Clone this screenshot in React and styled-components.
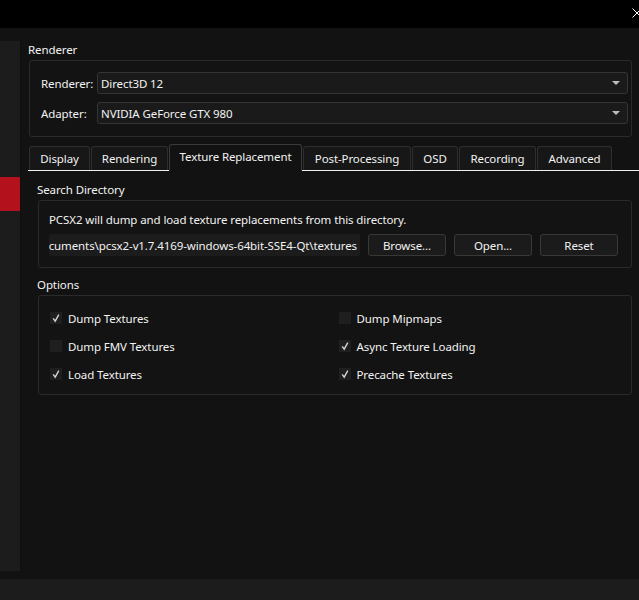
import React from "react"
import styled, { createGlobalStyle } from "styled-components"

const GlobalStyle = createGlobalStyle`
  html, body {
    margin: 0;
    padding: 0;
    overflow: hidden;
    background: #121212;
  }
  body {
    font-family: "Noto Sans", "Liberation Sans", sans-serif;
    font-size: 11.5px;
    letter-spacing: -0.1px;
    color: #f2f2f2;
  }
`

const Window = styled.div`
  width: 639px;
  height: 600px;
  display: flex;
  flex-direction: column;
  background: #121212;
  overflow: hidden;
`

const TitleBar = styled.div`
  height: 28px;
  flex: none;
  background: #000;
  display: flex;
  justify-content: flex-end;
  align-items: flex-start;
  padding-top: 8px;
  box-sizing: border-box;
  margin-right: -3px;
`

const Body = styled.div`
  flex: 1;
  display: flex;
  min-height: 0;
`

const Sidebar = styled.div`
  width: 21px;
  flex: none;
  margin-top: 13px;
  height: 530px;
  background: #1c1c1c;
  border-right: 1px solid #0e0e0e;
  box-sizing: border-box;
  padding-top: 136px;
`

const SideItem = styled.div`
  height: 34px;
  background: ${p => (p.active ? "#b3121c" : "transparent")};
`

const Content = styled.div`
  flex: 1;
  padding: 14px 8px 0 7px;
  display: flex;
  flex-direction: column;
`

const GroupTitle = styled.div`
  height: 16px;
  line-height: 16px;
  margin-bottom: 2px;
  margin-top: ${p => p.gap || 0}px;
`

const GroupBox = styled.div`
  border: 1px solid #2a2a2a;
  border-radius: 3px;
  background: #131313;
  margin-left: 1px;
`

const FormGrid = styled.div`
  display: grid;
  grid-template-columns: 56px 1fr;
  row-gap: 8px;
  align-items: center;
  padding: 11px 3px 12px 11px;
`

const Combo = styled.div`
  height: 22px;
  box-sizing: border-box;
  border: 1px solid #353535;
  border-radius: 3px;
  background: #1a1a1a;
  display: flex;
  align-items: center;
  justify-content: space-between;
  padding: 0 7px 0 3px;
`

const Arrow = styled.span`
  width: 0;
  height: 0;
  border-left: 4px solid transparent;
  border-right: 4px solid transparent;
  border-top: 4px solid #bdbdbd;
`

const TabBar = styled.div`
  display: flex;
  align-items: flex-end;
  gap: 1px;
  margin-top: 7px;
  padding-left: 1px;
  margin-right: -8px;
  border-bottom: 1px solid #f0f0f0;
  height: 27px;
  box-sizing: border-box;
`

const Tab = styled.div`
  width: ${p => p.w}px;
  height: ${p => (p.active ? 27 : 24)}px;
  box-sizing: border-box;
  border: 1px solid ${p => (p.active ? "#3a3a3a" : "#2e2e2e")};
  border-bottom: ${p => (p.active ? "1px solid #121212" : "none")};
  border-radius: 3px 3px 0 0;
  background: ${p => (p.active ? "#121212" : "#171717")};
  display: flex;
  align-items: center;
  justify-content: center;
  padding-bottom: ${p => (p.active ? 3 : 0)}px;
  margin-bottom: ${p => (p.active ? -1 : 0)}px;
`

const Panel = styled.div`
  padding: 11px 0 0 9px;
  display: flex;
  flex-direction: column;
`

const DirBody = styled.div`
  padding: 11px 13px 11px 10px;
  display: flex;
  flex-direction: column;
  gap: 6px;
`

const Line = styled.div`
  height: 16px;
  line-height: 16px;
`

const PathRow = styled.div`
  display: flex;
  gap: 8px;
  height: 22px;
`

const PathInput = styled.div`
  width: 311px;
  flex: none;
  background: #1c1c1c;
  border-radius: 2px;
  display: flex;
  justify-content: flex-end;
  align-items: center;
  overflow: hidden;
  white-space: nowrap;
  padding-right: 3px;
  box-sizing: border-box;
`

const Button = styled.div`
  width: 78px;
  box-sizing: border-box;
  border: 1px solid #383838;
  border-radius: 3px;
  background: #1b1b1b;
  display: flex;
  align-items: center;
  justify-content: center;
`

const OptionsGrid = styled.div`
  display: grid;
  grid-template-columns: 1fr 1fr;
  column-gap: 8px;
  row-gap: 12px;
  padding: 14px 12px 12px 11px;
`

const Check = styled.div`
  display: flex;
  align-items: center;
  gap: 6px;
  height: 16px;
`

const Box = styled.span`
  width: 12px;
  height: 12px;
  flex: none;
  background: #1f1f1f;
  display: flex;
  align-items: center;
  justify-content: center;
`

const BottomBar = styled.div`
  height: 21px;
  flex: none;
  background: #1c1c1c;
`

const tabs = [
  { label: "Display", w: 61 },
  { label: "Rendering", w: 77 },
  { label: "Texture Replacement", w: 133, active: true },
  { label: "Post-Processing", w: 108 },
  { label: "OSD", w: 46 },
  { label: "Recording", w: 77 },
  { label: "Advanced", w: 75 },
]

const options = [
  { label: "Dump Textures", on: true },
  { label: "Dump Mipmaps", on: false },
  { label: "Dump FMV Textures", on: false },
  { label: "Async Texture Loading", on: true },
  { label: "Load Textures", on: true },
  { label: "Precache Textures", on: true },
]

const CheckMark = () => (
  <svg width="10" height="10" viewBox="0 0 10 10">
    <path d="M2.2 5.4 L4.2 8.2 L7.8 1.6" fill="none" stroke="#d4d4d4" strokeWidth="1.4" />
  </svg>
)

export default function App() {
  return (
    <Window>
      <GlobalStyle />
      <TitleBar>
        <svg width="10" height="10" viewBox="0 0 10 10">
          <path d="M0.5 0.5 L9.5 9.5 M9.5 0.5 L0.5 9.5" stroke="#fff" strokeWidth="1" />
        </svg>
      </TitleBar>
      <Body>
        <Sidebar>
          <SideItem active />
        </Sidebar>
        <Content>
          <GroupTitle>Renderer</GroupTitle>
          <GroupBox>
            <FormGrid>
              <span>Renderer:</span>
              <Combo>
                <span>Direct3D 12</span>
                <Arrow />
              </Combo>
              <span>Adapter:</span>
              <Combo>
                <span>NVIDIA GeForce GTX 980</span>
                <Arrow />
              </Combo>
            </FormGrid>
          </GroupBox>

          <TabBar>
            {tabs.map(t => (
              <Tab key={t.label} w={t.w} active={t.active}>
                {t.label}
              </Tab>
            ))}
          </TabBar>

          <Panel>
            <GroupTitle>Search Directory</GroupTitle>
            <GroupBox>
              <DirBody>
                <Line>PCSX2 will dump and load texture replacements from this directory.</Line>
                <PathRow>
                  <PathInput>C:\Users\Stenzek\Documents\pcsx2-v1.7.4169-windows-64bit-SSE4-Qt\textures</PathInput>
                  <Button>Browse...</Button>
                  <Button>Open...</Button>
                  <Button>Reset</Button>
                </PathRow>
              </DirBody>
            </GroupBox>

            <GroupTitle gap={9}>Options</GroupTitle>
            <GroupBox>
              <OptionsGrid>
                {options.map(o => (
                  <Check key={o.label}>
                    <Box>{o.on && <CheckMark />}</Box>
                    <span>{o.label}</span>
                  </Check>
                ))}
              </OptionsGrid>
            </GroupBox>
          </Panel>
        </Content>
      </Body>
      <BottomBar />
    </Window>
  )
}
